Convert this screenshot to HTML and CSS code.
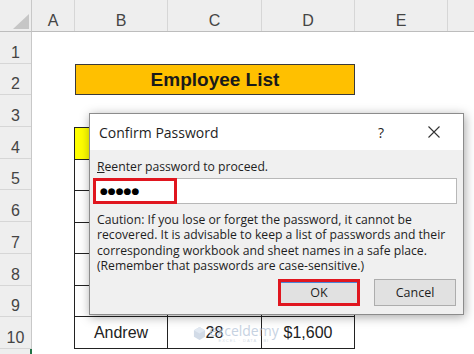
FILE: index.html
```html
<!DOCTYPE html>
<html lang="en">
<head>
    <meta charset="UTF-8">
    <meta name="viewport" content="width=device-width, initial-scale=1.0">
    <title>Confirm Password</title>
    <link rel="stylesheet" href="styles.css">
</head>
<body>

    <div class="page">
        <div class="sheet">
            <div class="corner"><span class="corner-tri"></span></div>
            <div class="col-heads">
                <div class="col-head col-a">A</div>
                <div class="col-head col-b">B</div>
                <div class="col-head col-c">C</div>
                <div class="col-head col-d">D</div>
                <div class="col-head col-e">E</div>
                <div class="col-head col-f"></div>
            </div>
            <div class="row-heads">
                <div class="row-head">1</div>
                <div class="row-head">2</div>
                <div class="row-head">3</div>
                <div class="row-head">4</div>
                <div class="row-head">5</div>
                <div class="row-head">6</div>
                <div class="row-head">7</div>
                <div class="row-head">8</div>
                <div class="row-head">9</div>
                <div class="row-head">10</div>
                <div class="row-head row-active"></div>
            </div>
            <div class="cells">
                <div class="title">Employee List</div>
                <div class="emp-table">
                    <div class="head-cell"></div><div class="head-cell"></div><div class="head-cell"></div>
                    <div></div><div></div><div></div>
                    <div></div><div></div><div></div>
                    <div></div><div></div><div></div>
                    <div></div><div></div><div></div>
                    <div></div><div></div><div></div>
                    <div>Andrew</div><div>28</div><div>$1,600</div>
                </div>
            </div>
        </div>

        <!-- faint site watermark over the sheet -->
        <div class="watermark">
            <svg width="13" height="15" viewBox="0 0 14 16">
                <path d="M7 1 L13 4.5 L13 11.5 L7 15 L1 11.5 L1 4.5 Z" fill="#c3d0e0"/>
                <path d="M7 1 L13 4.5 L7 8 L1 4.5 Z" fill="#d9e2ee"/>
            </svg>
            <div class="wm-text">
                <span class="wm-name">exceldemy</span>
                <span class="wm-sub">EXCEL · DATA · BI</span>
            </div>
        </div>

        <div class="dialog">
            <div class="title-bar">
                <span class="title-text">Confirm Password</span>
                <span class="help">?</span>
                <svg class="close" width="12" height="12" viewBox="0 0 12 12">
                    <path d="M0.5 0.5 L11.5 11.5 M11.5 0.5 L0.5 11.5" stroke="#333" stroke-width="1.1" fill="none"/>
                </svg>
            </div>
            <div class="dialog-body">
                <div class="prompt"><u>R</u>eenter password to proceed.</div>
                <div class="pw-input">
                    <span class="pw-dots">●●●●●</span>
                    <span class="pw-mark"></span>
                </div>
                <div class="caution">
                    Caution: If you lose or forget the password, it cannot be<br>
                    recovered. It is advisable to keep a list of passwords and their<br>
                    corresponding workbook and sheet names in a safe place.<br>
                    (Remember that passwords are case-sensitive.)
                </div>
                <div class="actions">
                    <button class="btn btn-ok">OK</button>
                    <button class="btn">Cancel</button>
                </div>
            </div>
        </div>
    </div>

</body>
</html>
```

FILE: styles.css
```css
body {
    margin: 0;
    background-color: #ffffff;
    font-family: "Liberation Sans", Arial, sans-serif;
    overflow: hidden;
}

.page {
    position: relative;
    width: 474px;
    height: 354px;
    overflow: hidden;
}

.sheet {
    display: grid;
    grid-template-columns: 32px 1fr;
    grid-template-rows: 32px 1fr;
    height: 100%;
}

.corner {
    position: relative;
    background-color: #eeeeee;
    border-right: 1px solid #c8c8c8;
    border-bottom: 1px solid #bdbdbd;
    box-sizing: border-box;
}

.corner-tri {
    position: absolute;
    right: 2px;
    bottom: 2px;
    width: 0;
    height: 0;
    border-left: 16px solid transparent;
    border-bottom: 15px solid #c6c6c6;
}

.col-heads {
    display: flex;
    background-color: #eeeeee;
    border-bottom: 1px solid #bdbdbd;
}

.col-head {
    flex: none;
    box-sizing: border-box;
    display: flex;
    align-items: flex-end;
    justify-content: center;
    padding-bottom: 2px;
    border-right: 1px solid #d6d6d6;
    font-size: 16px;
    line-height: 16px;
    color: #444444;
}

.col-a { width: 43px; }
.col-b { width: 93px; }
.col-c { width: 94px; }
.col-d { width: 93px; }
.col-e { width: 93px; }
.col-f { flex: 1; border-right: none; }

.row-heads {
    display: flex;
    flex-direction: column;
    background-color: #eeeeee;
    border-right: 1px solid #c8c8c8;
}

.row-head {
    flex: none;
    height: 31.7px;
    box-sizing: border-box;
    display: flex;
    align-items: flex-end;
    justify-content: center;
    padding-bottom: 2px;
    border-bottom: 1px solid #d6d6d6;
    font-size: 16px;
    line-height: 16px;
    color: #444444;
}

.row-active {
    border-right: 2px solid #217346;
    margin-right: -1px;
}

.cells {
    display: grid;
    grid-template-columns: 43px 93px 94px 93px 93px 1fr;
    grid-template-rows: repeat(11, 31.7px);
}

.title {
    grid-row: 2;
    grid-column: 2 / span 3;
    display: flex;
    align-items: center;
    justify-content: center;
    background-color: #ffc000;
    border: 1px solid #3a3a3a;
    font-size: 19px;
    font-weight: bold;
    color: #1a1a1a;
}

.emp-table {
    grid-row: 4 / span 7;
    grid-column: 2 / span 3;
    display: grid;
    grid-template-columns: 93px 94px 1fr;
    grid-template-rows: repeat(7, 1fr);
    border-top: 1px solid #222222;
    border-left: 1px solid #222222;
    margin-left: -1px;
}

.emp-table > div {
    display: flex;
    align-items: center;
    justify-content: center;
    border-right: 1px solid #222222;
    border-bottom: 1px solid #222222;
    font-size: 16px;
    color: #222222;
}

.emp-table > .head-cell {
    background-color: #ffff00;
}

.watermark {
    position: absolute;
    left: 193px;
    top: 324px;
    display: flex;
    align-items: center;
    gap: 3px;
    opacity: 0.75;
    pointer-events: none;
}

.wm-text {
    display: flex;
    flex-direction: column;
    align-items: center;
}

.wm-name {
    font-family: "Open Sans", sans-serif;
    font-size: 14px;
    line-height: 14px;
    color: #b4c4d8;
}

.wm-sub {
    font-size: 4px;
    line-height: 5px;
    letter-spacing: 1px;
    color: #c4cfdc;
}

.dialog {
    position: absolute;
    left: 89px;
    top: 113px;
    width: 375px;
    height: 202px;
    box-sizing: border-box;
    display: flex;
    flex-direction: column;
    background-color: #f0f0f0;
    border: 1px solid #8c8c8c;
    box-shadow: 1px 2px 10px rgba(0, 0, 0, 0.35);
    font-family: "Open Sans", sans-serif;
    color: #1e1e1e;
}

.title-bar {
    flex: none;
    height: 36px;
    display: flex;
    align-items: center;
    padding-left: 9px;
    background-color: #ffffff;
}

.title-text {
    flex: 1;
    font-size: 14px;
}

.help {
    font-size: 14px;
    margin-right: 44px;
}

.close {
    margin-right: 23px;
}

.dialog-body {
    flex: 1;
    display: flex;
    flex-direction: column;
    padding: 9px 6px 8px 3px;
}

.prompt {
    margin-left: 4px;
    font-size: 12.2px;
    line-height: 15px;
}

.pw-input {
    position: relative;
    margin-top: 4px;
    height: 26px;
    box-sizing: border-box;
    display: flex;
    align-items: center;
    padding-left: 6px;
    background-color: #ffffff;
    border: 1px solid #b8b8b8;
}

.pw-dots {
    font-family: "DejaVu Sans", sans-serif;
    font-size: 9px;
    color: #000000;
}

.pw-mark {
    position: absolute;
    left: -1px;
    top: -1px;
    width: 84px;
    height: 26px;
    box-sizing: border-box;
    border: 3px solid #e0161f;
}

.caution {
    margin: 8px 0 0 4px;
    font-size: 12.2px;
    line-height: 15.3px;
}

.actions {
    margin-top: auto;
    display: flex;
    justify-content: flex-end;
    gap: 14px;
    padding-right: 1px;
}

.btn {
    width: 82px;
    height: 27px;
    box-sizing: border-box;
    padding: 0;
    background-color: #e1e1e1;
    border: 1px solid #adadad;
    font-family: "Open Sans", sans-serif;
    font-size: 12.5px;
    color: #1e1e1e;
}

.btn-ok {
    border: 3px solid #e0161f;
    box-shadow: inset 0 1px 0 #4a86d8;
}
```
